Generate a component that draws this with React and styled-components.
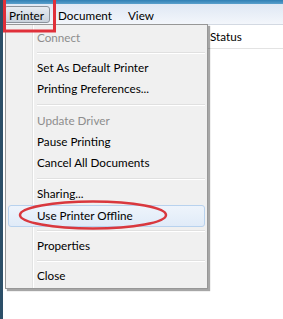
import React from 'react';
import styled, { createGlobalStyle } from 'styled-components';

const Global = createGlobalStyle`
  html, body { margin: 0; padding: 0; background: #fff; }
  body { font-family: Lato, "Open Sans", sans-serif; font-size: 11.7px; }
`;

const Window = styled.div`
  position: relative;
  width: 283px;
  height: 319px;
  overflow: hidden;
  background: #fff;
  border-left: 3px solid #2c4f68;
  box-sizing: border-box;
`;

const TitleEdge = styled.div`
  height: 4px;
  background: linear-gradient(#2f7fb4, #5aa0cc);
`;

const MenuBar = styled.div`
  display: flex;
  align-items: center;
  height: 20px;
  padding-left: 1px;
  background: linear-gradient(#dfe8f4, #f3f6fb);
  border-bottom: 1px solid #d3d9e2;
`;

const BarItem = styled.div`
  height: 17px;
  line-height: 16px;
  padding: 0 5px 0 4px;
  margin-right: ${p => p.gap || 0}px;
  box-sizing: border-box;
  color: #000;
  border-radius: 3px;
  border: 1px solid ${p => (p.active ? '#8b939c' : 'transparent')};
  background: ${p => (p.active ? 'linear-gradient(#e6ebf1, #c9d2dc)' : 'transparent')};
`;

const Body = styled.div`
  display: flex;
  padding-left: 2px;
`;

const Menu = styled.div`
  width: 197px;
  margin-top: -1px;
  padding: 2px;
  background: #f0f0f0;
  border: 1px solid #979797;
  box-shadow: 2px 2px 1px rgba(0, 0, 0, 0.35);
  background-image: linear-gradient(90deg, transparent 26px, #e2e3e3 26px, #e2e3e3 27px, #fff 27px, #fff 28px, transparent 28px);
  position: relative;
  z-index: 1;
`;

const Item = styled.div`
  height: ${p => p.h || 21}px;
  line-height: ${p => (p.h || 21) - 3}px;
  padding-left: 28px;
  box-sizing: border-box;
  border: 1px solid ${p => (p.hot ? '#b8d2ee' : 'transparent')};
  border-radius: 3px;
  background: ${p => (p.hot ? 'linear-gradient(#eef4fb, #e0ebf8)' : 'transparent')};
  color: ${p => (p.disabled ? '#8d8d8d' : '#000')};
  white-space: nowrap;
`;

const Sep = styled.div`
  height: ${p => p.h || 9}px;
  margin-left: 29px;
  display: flex;
  flex-direction: column;
  justify-content: center;
  &::before {
    content: '';
    height: 1px;
    background: #e0e0e0;
    border-bottom: 1px solid #fff;
  }
`;

const List = styled.div`
  flex: 1;
`;

const Header = styled.div`
  height: 23px;
  line-height: 22px;
  padding-left: 2px;
  border-bottom: 1px solid #e3e3e3;
  color: #000;
`;

const Mark = styled.svg`
  position: absolute;
  left: 0;
  top: 0;
  pointer-events: none;
  z-index: 2;
`;

export default function App() {
  return (
    <>
      <Global />
      <Window>
        <TitleEdge />
        <MenuBar>
          <BarItem active gap={3}>Printer</BarItem>
          <BarItem gap={5}>Document</BarItem>
          <BarItem>View</BarItem>
        </MenuBar>
        <Body>
          <Menu>
            <Item disabled h={22}>Connect</Item>
            <Sep h={8} />
            <Item>Set As Default Printer</Item>
            <Item>Printing Preferences...</Item>
            <Sep h={11} />
            <Item disabled>Update Driver</Item>
            <Item h={21}>Pause Printing</Item>
            <Item h={22}>Cancel All Documents</Item>
            <Sep />
            <Item h={22}>Sharing...</Item>
            <Item hot h={22}>Use Printer Offline</Item>
            <Sep h={8} />
            <Item h={22}>Properties</Item>
            <Sep h={8} />
            <Item h={21}>Close</Item>
          </Menu>
          <List>
            <Header>Status</Header>
          </List>
        </Body>
        <Mark width="283" height="319" viewBox="0 0 283 319">
          <rect x="1.5" y="-2" width="50" height="33" fill="none" stroke="#e0303a" strokeWidth="3" />
          <ellipse cx="90" cy="215" rx="73" ry="13.5" fill="none" stroke="#d9383e" strokeWidth="2.5" />
        </Mark>
      </Window>
    </>
  );
}
